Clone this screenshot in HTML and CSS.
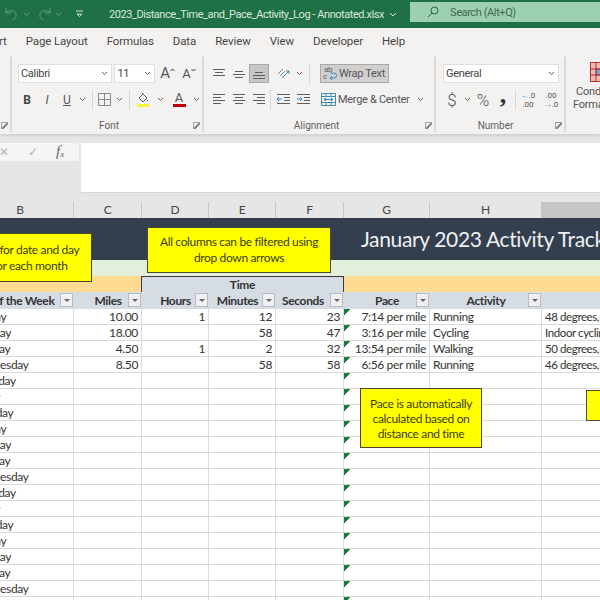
FILE: index.html
```html
<!DOCTYPE html>
<html lang="en">
<head>
  <meta charset="UTF-8">
  <title>2023_Distance_Time_and_Pace_Activity_Log - Annotated.xlsx</title>
  <link rel="stylesheet" href="styles.css">
</head>
<body>
<div class="page">

  <!-- title bar -->
  <div class="titlebar">
    <div class="qat">
      <svg class="undo" width="14" height="14" viewBox="0 0 14 14"><path d="M2 1v5h5M2 6c2-3 8-3.500 10 1 .8 3-1 5-3.500 6"/></svg>
      <svg class="qchev" width="7" height="5" viewBox="0 0 7 5"><path d="M1 1l2.500 2.500L6 1"/></svg>
      <svg class="redo" width="14" height="14" viewBox="0 0 14 14"><path d="M12 1v5H7M12 6C10 3 4 2.500 2 7c-.8 3 1 5 3.500 6"/></svg>
      <svg class="qchev" width="7" height="5" viewBox="0 0 7 5"><path d="M1 1l2.500 2.500L6 1"/></svg>
      <svg class="qcustom" width="9" height="8" viewBox="0 0 9 8"><path d="M1 1h7M2 4l2.500 2.500L7 4z"/></svg>
    </div>
    <div class="doc-title">2023_Distance_Time_and_Pace_Activity_Log - Annotated.xlsx
      <svg width="8" height="5" viewBox="0 0 8 5"><path d="M1 1l3 3 3-3"/></svg>
    </div>
    <div class="search">
      <svg width="12" height="12" viewBox="0 0 12 12"><circle cx="7.500" cy="4.500" r="3.500"/><path d="M5 7l-4 4"/></svg>
      <span>Search (Alt+Q)</span>
    </div>
  </div>

  <!-- tabs -->
  <div class="tabs">
    <span>Insert</span>
    <span>Page Layout</span>
    <span>Formulas</span>
    <span>Data</span>
    <span>Review</span>
    <span>View</span>
    <span>Developer</span>
    <span>Help</span>
  </div>

  <!-- ribbon -->
  <div class="ribbon">
    <div class="group g-clip">
      <div class="rows"></div>
      <div class="foot"><span class="launch"></span></div>
    </div>

    <div class="group g-font">
      <div class="rows">
        <div class="row">
          <div class="select font-name">Calibri<svg class="chev" width="7" height="5" viewBox="0 0 7 5"><path d="M1 1l2.500 2.500L6 1"/></svg></div>
          <div class="select font-size">11<svg class="chev" width="7" height="5" viewBox="0 0 7 5"><path d="M1 1l2.500 2.500L6 1"/></svg></div>
          <span class="fs-btn fs-up">A<svg width="5" height="4" viewBox="0 0 5 4"><path d="M.5 3l2-2 2 2"/></svg></span>
          <span class="fs-btn fs-down">A<svg width="5" height="4" viewBox="0 0 5 4"><path d="M.5 1l2 2 2-2"/></svg></span>
        </div>
        <div class="row">
          <span class="btn w20 b">B</span>
          <span class="btn w20 i">I</span>
          <span class="btn w20 u">U</span>
          <span class="btn w10"><svg class="chev" width="7" height="5" viewBox="0 0 7 5"><path d="M1 1l2.500 2.500L6 1"/></svg></span>
          <span class="sep sep-a"></span>
          <span class="btn w20"><svg width="13" height="13" viewBox="0 0 13 13"><path class="soft" d="M.5.500h12v12H.5zM6.500.500v12M.5 6.500h12"/></svg></span>
          <span class="btn w10"><svg class="chev" width="7" height="5" viewBox="0 0 7 5"><path d="M1 1l2.500 2.500L6 1"/></svg></span>
          <span class="sep sep-b"></span>
          <span class="btn w24"><svg width="14" height="15" viewBox="0 0 14 15"><path d="M3 6l4-4 4 4-4 4zM6 1l1 1M11.500 8v1"/><rect class="swatch-y" x="1" y="12" width="12" height="3"/></svg></span>
          <span class="btn w10"><svg class="chev" width="7" height="5" viewBox="0 0 7 5"><path d="M1 1l2.500 2.500L6 1"/></svg></span>
          <span class="btn w24 color-a">A<i></i></span>
          <span class="btn w10"><svg class="chev" width="7" height="5" viewBox="0 0 7 5"><path d="M1 1l2.500 2.500L6 1"/></svg></span>
        </div>
      </div>
      <div class="foot"><span></span><label>Font</label><span class="launch"></span></div>
    </div>

    <div class="group g-align">
      <div class="rows">
        <div class="row">
          <span class="btn w20"><svg width="12" height="10" viewBox="0 0 12 10"><path d="M0 .500h12M2 3.500h8M0 6.500h12"/></svg></span>
          <span class="btn w20"><svg width="12" height="10" viewBox="0 0 12 10"><path d="M2 2.500h8M0 5.500h12M2 8.500h8"/></svg></span>
          <span class="btn w20 pressed"><svg width="12" height="10" viewBox="0 0 12 10"><path d="M2 3.500h8M0 6.500h12M0 9.500h12"/></svg></span>
          <span class="btn w20 orient"><svg width="14" height="13" viewBox="0 0 14 13"><path class="soft" d="M1 7l5-5M3 9l5-5"/><path class="blue" d="M5 11l7-7M9 4h3v3"/></svg></span>
          <span class="btn w10"><svg class="chev" width="7" height="5" viewBox="0 0 7 5"><path d="M1 1l2.500 2.500L6 1"/></svg></span>
          <span class="sep sep-c"></span>
          <div class="wrap-btn">
            <svg width="14" height="15" viewBox="0 0 14 15"><path class="blue" d="M7 7h4a2.500 2.500 0 0 1 0 5H7M9 10l-2 2 2 2"/><text x="1" y="6" class="ic-text">ab</text><text x="0" y="13" class="ic-text">c</text></svg>
            Wrap Text
          </div>
        </div>
        <div class="row">
          <span class="btn w20"><svg width="12" height="11" viewBox="0 0 12 11"><path d="M0 .500h12M0 3.500h8M0 6.500h12M0 9.500h8"/></svg></span>
          <span class="btn w20"><svg width="12" height="11" viewBox="0 0 12 11"><path d="M0 .500h12M2 3.500h8M0 6.500h12M2 9.500h8"/></svg></span>
          <span class="btn w20"><svg width="12" height="11" viewBox="0 0 12 11"><path d="M0 .500h12M4 3.500h8M0 6.500h12M4 9.500h8"/></svg></span>
          <span class="sep sep-d"></span>
          <span class="btn w20"><svg width="13" height="11" viewBox="0 0 13 11"><path d="M0 .500h13M7 3.500h6M7 6.500h6M0 9.500h13"/><path class="blue" d="M5 5H0M2 3L0 5l2 2"/></svg></span>
          <span class="btn w20"><svg width="13" height="11" viewBox="0 0 13 11"><path d="M0 .500h13M7 3.500h6M7 6.500h6M0 9.500h13"/><path class="blue" d="M0 5h5M3 3l2 2-2 2"/></svg></span>
          <span class="merge">
            <svg width="15" height="13" viewBox="0 0 15 13"><path class="teal" d="M.5.500h14v12H.5zM.5 3.500h14M.5 9.500h14M5 .500v3M10 .500v3M5 9.500v3M10 9.500v3"/><path class="blue" d="M3 6.500h9M5 5L3 6.500 5 8M10 5l2 1.500L10 8"/></svg>
            Merge &amp; Center
          </span>
          <span class="btn w10 merge-chev"><svg class="chev" width="7" height="5" viewBox="0 0 7 5"><path d="M1 1l2.500 2.500L6 1"/></svg></span>
        </div>
      </div>
      <div class="foot"><span></span><label class="lbl-align">Alignment</label><span class="launch"></span></div>
    </div>

    <div class="group g-num">
      <div class="rows">
        <div class="row">
          <div class="select num-format">General<svg class="chev" width="7" height="5" viewBox="0 0 7 5"><path d="M1 1l2.500 2.500L6 1"/></svg></div>
        </div>
        <div class="row">
          <span class="btn w18 big">$</span>
          <span class="btn w12"><svg class="chev" width="7" height="5" viewBox="0 0 7 5"><path d="M1 1l2.500 2.500L6 1"/></svg></span>
          <span class="btn w20 big">%</span>
          <span class="btn w20 comma">,</span>
          <span class="sep sep-e"></span>
          <span class="btn w18 decimals"><small><em>&#8592;</em>.0</small><small>.00</small></span>
          <span class="btn w18 decimals gap-l"><small>.00</small><small><em>&#8594;</em>.0</small></span>
        </div>
      </div>
      <div class="foot"><span></span><label class="lbl-num">Number</label><span class="launch"></span></div>
    </div>

    <div class="group g-styles">
      <svg width="20" height="20" viewBox="0 0 20 20"><path fill="#f7b6ae" stroke="#a33" d="M.5.500h19v19H.5z"/><path fill="#6fa8dc" d="M6 7h14v6H6z"/><path stroke="#a33" d="M6 0v20M.5 7h19M.5 13h19"/></svg>
      <div class="styles-label">Conditional<br>Formatting <span class="hide">v</span></div>
    </div>
  </div>

  <!-- formula bar -->
  <div class="formula">
    <div class="fx-box">
      <span class="fx-x">&#10005;</span>
      <span class="fx-ok">&#10003;</span>
      <span class="fx">f<sub>x</sub></span>
    </div>
    <div class="fx-input"></div>
  </div>

  <!-- sheet -->
  <div class="sheet">
    <div class="grid col-heads">
      <div>B</div><div>C</div><div>D</div><div>E</div><div>F</div><div>G</div><div>H</div><div class="col-on"></div>
    </div>

    <div class="banner">January 2023 Activity Tracker</div>
    <div class="band-green"></div>

    <div class="grid band-row">
      <div class="band-or s2"></div>
      <div class="time s3">Time</div>
      <div class="band-or s3"></div>
    </div>

    <div class="grid head-row">
      <div class="hd hd-week"><span>Day of the Week</span><i class="filter"></i></div>
      <div class="hd"><span>Miles</span><i class="filter"></i></div>
      <div class="hd"><span>Hours</span><i class="filter"></i></div>
      <div class="hd hd-min"><span>Minutes</span><i class="filter"></i></div>
      <div class="hd hd-sec"><span>Seconds</span><i class="filter"></i></div>
      <div class="hd"><span>Pace</span><i class="filter"></i></div>
      <div class="hd"><span>Activity</span><i class="filter"></i></div>
      <div class="hd"></div>
    </div>

    <div class="grid data"><div>Sunday</div><div class="n">10.00</div><div class="n">1</div><div class="n">12</div><div class="n">23</div><div class="n warn">7:14 per mile</div><div>Running</div><div>48 degrees, clear</div></div>
    <div class="grid data"><div>Monday</div><div class="n">18.00</div><div class="n"></div><div class="n">58</div><div class="n">47</div><div class="n warn">3:16 per mile</div><div>Cycling</div><div>Indoor cycling</div></div>
    <div class="grid data"><div>Tuesday</div><div class="n">4.50</div><div class="n">1</div><div class="n">2</div><div class="n">32</div><div class="n warn">13:54 per mile</div><div>Walking</div><div>50 degrees, clear</div></div>
    <div class="grid data"><div>Wednesday</div><div class="n">8.50</div><div class="n"></div><div class="n">58</div><div class="n">58</div><div class="n warn">6:56 per mile</div><div>Running</div><div>46 degrees, clear</div></div>
    <div class="grid data"><div>Thursday</div><div></div><div></div><div></div><div></div><div class="warn"></div><div></div><div></div></div>
    <div class="grid data"><div>Friday</div><div></div><div></div><div></div><div></div><div class="warn"></div><div></div><div></div></div>
    <div class="grid data"><div>Saturday</div><div></div><div></div><div></div><div></div><div class="warn"></div><div></div><div></div></div>
    <div class="grid data"><div>Sunday</div><div></div><div></div><div></div><div></div><div class="warn"></div><div></div><div></div></div>
    <div class="grid data"><div>Monday</div><div></div><div></div><div></div><div></div><div class="warn"></div><div></div><div></div></div>
    <div class="grid data"><div>Tuesday</div><div></div><div></div><div></div><div></div><div class="warn"></div><div></div><div></div></div>
    <div class="grid data"><div>Wednesday</div><div></div><div></div><div></div><div></div><div class="warn"></div><div></div><div></div></div>
    <div class="grid data"><div>Thursday</div><div></div><div></div><div></div><div></div><div class="warn"></div><div></div><div></div></div>
    <div class="grid data"><div>Friday</div><div></div><div></div><div></div><div></div><div class="warn"></div><div></div><div></div></div>
    <div class="grid data"><div>Saturday</div><div></div><div></div><div></div><div></div><div class="warn"></div><div></div><div></div></div>
    <div class="grid data"><div>Sunday</div><div></div><div></div><div></div><div></div><div class="warn"></div><div></div><div></div></div>
    <div class="grid data"><div>Monday</div><div></div><div></div><div></div><div></div><div class="warn"></div><div></div><div></div></div>
    <div class="grid data"><div>Tuesday</div><div></div><div></div><div></div><div></div><div class="warn"></div><div></div><div></div></div>
    <div class="grid data"><div>Wednesday</div><div></div><div></div><div></div><div></div><div class="warn"></div><div></div><div></div></div>
    <div class="grid data"><div></div><div></div><div></div><div></div><div></div><div class="warn"></div><div></div><div></div></div>

    <!-- yellow notes floating over the cells -->
    <div class="note note-date">Set for date and day<br>for each month</div>
    <div class="note note-filter">All columns can be filtered using<br>drop down arrows</div>
    <div class="note note-pace">Pace is automatically<br>calculated based on<br>distance and time</div>
    <div class="note note-right"></div>
  </div>
</div>
</body>
</html>
```
FILE: styles.css
```css
* {
  box-sizing: border-box;
}
html, body {
  margin: 0;
  padding: 0;
}
body {
  font-family: Roboto, sans-serif;
  color: #444;
  background: #fff;
}
.page {
  width: 600px;
  height: 600px;
  overflow: hidden;
}
svg {
  display: block;
  fill: none;
  stroke: #605e5c;
  stroke-width: 1;
  flex: none;
}

/* title bar */
.titlebar {
  height: 28px;
  background: #1f7145;
  display: flex;
  align-items: center;
  color: #d9e9df;
}
.qat {
  display: flex;
  align-items: center;
  width: 109px;
  flex: none;
  padding-left: 4px;
}
.qat svg {
  stroke: #5f9c7c;
}
.qat .undo {
  margin-right: 5px;
}
.qat .redo {
  margin: 0 3px 0 8px;
}
.qat .qcustom {
  margin-left: 13px;
  stroke: #cfe3d7;
}
.doc-title {
  width: 301px;
  flex: none;
  padding-top: 1px;
  font-size: 11px;
  letter-spacing: -0.45px;
  display: flex;
  align-items: center;
  white-space: nowrap;
}
.doc-title svg {
  stroke: #d9e9df;
  margin-left: 5px;
}
.search {
  flex: 1;
  height: 20px;
  margin-top: -4px;
  background: #9dd0b0;
  display: flex;
  align-items: center;
  padding-left: 17px;
  font-size: 11px;
  letter-spacing: -0.4px;
  color: #3b6a50;
}
.search svg {
  stroke: #2f5c44;
  margin-right: 11px;
}

/* tabs */
.tabs {
  height: 28px;
  background: #f3f2f1;
  display: flex;
  align-items: center;
  gap: 19px;
  padding-bottom: 2px;
  font-size: 11.5px;
  letter-spacing: -0.12px;
  color: #484644;
  white-space: nowrap;
  margin-left: -22px;
}
.tabs span {
  flex: none;
}

/* ribbon */
.ribbon {
  height: 78px;
  background: #f3f2f1;
  display: flex;
  position: relative;
  box-shadow: 0 2px 2px #d0d0d0;
}
.group {
  flex: none;
  display: flex;
  flex-direction: column;
  border-right: 2px solid #dcdad8;
  margin: 1px 0 2px;
}
.g-clip {
  width: 12px;
}
.g-font {
  width: 192px;
  padding-left: 6px;
}
.g-align {
  width: 232px;
  padding-left: 5px;
}
.g-num {
  width: 130px;
  padding-left: 7px;
}
.g-styles {
  border: 0;
  width: 80px;
  align-items: flex-start;
  padding: 5px 0 0 24px;
}
.rows {
  flex: 1;
  padding-top: 7px;
}
.row {
  display: flex;
  align-items: center;
  height: 19px;
  margin-bottom: 7px;
  white-space: nowrap;
}
.foot {
  height: 14px;
  display: flex;
  justify-content: space-between;
  align-items: center;
  padding: 1px 2px 0 0;
  font-size: 10px;
  color: #605e5c;
}
.lbl-align {
  margin-right: 8px;
}
.lbl-num {
  margin-right: 14px;
}
.launch {
  width: 7px;
  height: 7px;
  border-left: 1px solid #a19f9d;
  border-top: 1px solid #a19f9d;
  background: linear-gradient(135deg, transparent 40%, #8a8886 40%, #8a8886 60%, transparent 60%);
}
.foot span:first-child {
  width: 7px;
}
.g-clip .foot {
  justify-content: flex-end;
}
.select {
  height: 19px;
  background: #fff;
  border: 1px solid #e1dfdd;
  display: flex;
  align-items: center;
  justify-content: space-between;
  padding: 0 3px 0 2px;
  font-size: 11px;
  letter-spacing: -0.3px;
  color: #444;
}
.chev {
  stroke: #605e5c;
}
.font-name {
  width: 95px;
  margin-right: 2px;
}
.font-size {
  width: 41px;
}
.num-format {
  width: 116px;
}
.fs-btn {
  display: flex;
  font-size: 15px;
  color: #555;
  line-height: 19px;
  margin-left: 5px;
  width: 20px;
}
.fs-btn svg {
  margin-top: 4px;
  stroke: #333;
}
.fs-down {
  font-size: 13px;
  margin-left: 2px;
}
.btn {
  height: 19px;
  display: flex;
  align-items: center;
  justify-content: center;
  flex: none;
  font-size: 12px;
  color: #555;
}
.w10 { width: 10px; }
.w12 { width: 12px; }
.w18 { width: 18px; }
.w20 { width: 20px; }
.w24 { width: 24px; }
.b {
  font-weight: 700;
  color: #444;
  margin-left: -1px;
}
.i {
  font-style: italic;
}
.u {
  text-decoration: underline;
}
.sep {
  width: 1px;
  height: 20px;
  background: #d8d6d4;
  flex: none;
}
.sep-a { margin: 0 1px 0 5px; }
.sep-b { margin: 0 1px 0 5px; }
.sep-c { margin: 0 10px 0 5px; }
.sep-d { margin: 0 2px 0 1px; }
.sep-e { margin: 0 3px 0 2px; }
.pressed {
  background: #c8c6c4;
  border: 1px solid #aaa8a6;
}
.orient {
  margin-left: 5px;
}
.soft {
  stroke: #8a8886;
}
.blue {
  stroke: #2f86c8;
}
.teal {
  stroke: #3f8fa8;
}
.swatch-y {
  fill: #f5f536;
  stroke: none;
}
.color-a {
  flex-direction: column;
  font-size: 13px;
  line-height: 11px;
  margin-left: 2px;
}
.color-a i {
  display: block;
  width: 13px;
  height: 3px;
  background: #c00000;
  margin-top: 1px;
}
.ic-text {
  font-size: 8px;
  fill: #605e5c;
  stroke: none;
}
.wrap-btn {
  width: 69px;
  height: 19px;
  background: #d2d0ce;
  border: 1px solid #aaa8a6;
  display: flex;
  align-items: center;
  gap: 2px;
  padding-left: 2px;
  font-size: 11px;
  letter-spacing: -0.3px;
  color: #555;
}
.merge {
  display: flex;
  align-items: center;
  gap: 2px;
  margin-left: 8px;
  font-size: 11px;
  letter-spacing: -0.3px;
  color: #555;
}
.merge-chev {
  margin-left: 6px;
}
.big {
  font-size: 17px;
  font-weight: 300;
}
.comma {
  font-family: "Liberation Serif", serif;
  font-size: 26px;
  font-weight: 700;
  line-height: 19px;
  padding-bottom: 10px;
  color: #333;
}
.decimals {
  flex-direction: column;
  line-height: 9px;
}
.decimals small {
  font-size: 8px;
}
.decimals em {
  font-style: normal;
  color: #2f86c8;
}
.gap-l {
  margin-left: 5px;
}
.styles-label {
  margin: 3px 0 0 -17px;
  font-size: 11px;
  letter-spacing: -0.2px;
  line-height: 13px;
  text-align: center;
  white-space: nowrap;
  color: #555;
}
.hide {
  visibility: hidden;
}

/* formula bar */
.formula {
  height: 68px;
  background: #e6e6e6;
  padding-top: 9px;
  display: flex;
  align-items: flex-start;
  gap: 2px;
}
.fx-box {
  width: 79px;
  height: 18px;
  background: #f5f5f5;
  display: flex;
  align-items: center;
  font-size: 12px;
  color: #b5b5b5;
}
.fx-x {
  width: 20px;
  margin-left: -6px;
  text-align: center;
}
.fx-ok {
  width: 38px;
  text-align: center;
}
.fx {
  font-family: "Liberation Serif", serif;
  font-style: italic;
  font-size: 15px;
  color: #666;
  line-height: 14px;
  margin-left: 4px;
}
.fx sub {
  font-size: 9px;
  vertical-align: -1px;
}
.fx-input {
  flex: 1;
  height: 50px;
  background: #fff;
  border-bottom: 1px solid #d4d4d4;
}

/* sheet */
.sheet {
  position: relative;
  font-family: Lato, sans-serif;
  font-size: 12px;
  letter-spacing: -0.35px;
  color: #333;
}
.grid {
  display: grid;
  grid-template-columns: 107px 68px 67px 67px 68px 86px 112px 200px;
  margin-left: -33px;
}
.col-heads {
  height: 16px;
  background: #e6e6e6;
  font-size: 12px;
  line-height: 16px;
  text-align: center;
  color: #444;
}
.col-heads div {
  border-right: 1px solid #c8c8c8;
}
.col-on {
  background: #c6c6c6;
}
.banner {
  height: 42px;
  background: #333f4f;
  color: #eef0f2;
  padding-left: 361px;
  font-size: 21px;
  letter-spacing: -0.35px;
  line-height: 42px;
  white-space: nowrap;
  overflow: hidden;
}
.band-green {
  height: 16px;
  background: #e2efda;
}
.band-row {
  height: 16px;
}
.band-or {
  background: #fddb93;
}
.s2 { grid-column: span 2; }
.s3 { grid-column: span 3; }
.time {
  background: #d6dce4;
  border: 1px solid #3a3a3a;
  border-bottom: 0;
  margin-left: -1px;
  text-align: center;
  font-weight: 700;
  line-height: 15px;
}
.head-row {
  height: 17px;
  background: #d6dce4;
}
.hd {
  position: relative;
  text-align: center;
  font-weight: 700;
  line-height: 17px;
  white-space: nowrap;
}
.hd-week {
  padding-right: 16px;
}
.hd-min {
  padding-right: 10px;
}
.hd-sec {
  padding-right: 14px;
}
.filter {
  position: absolute;
  top: 1px;
  right: 1px;
  width: 13px;
  height: 14px;
  background: #f0f0f0;
  border: 1px solid #b8bcc2;
}
.filter::after {
  content: "";
  position: absolute;
  left: 3px;
  top: 5px;
  border: 3px solid transparent;
  border-top-color: #666;
  border-bottom: 0;
}
.data {
  height: 16px;
  line-height: 15px;
  border-bottom: 1px solid #d9d9d9;
  white-space: nowrap;
}
.data div {
  border-right: 1px solid #dcdcdc;
  padding: 0 3px 0 3px;
  overflow: hidden;
}
.data div:last-child {
  font-size: 11.5px;
  letter-spacing: -0.4px;
}
.data .warn {
  background: linear-gradient(135deg, #207a3a 4.500px, transparent 4.500px) no-repeat 0 0 / 7px 7px;
}
.data .n {
  text-align: right;
}

/* notes */
.note {
  position: absolute;
  background: #ffff00;
  border: 1px solid #4a4a2a;
  color: #3d3d14;
  text-align: center;
  font-size: 12px;
  line-height: 16px;
  white-space: nowrap;
  display: flex;
  align-items: center;
  justify-content: center;
}
.note-date {
  left: -32px;
  top: 31px;
  width: 124px;
  height: 49px;
}
.note-filter {
  left: 147px;
  top: 25px;
  width: 184px;
  height: 46px;
}
.note-pace {
  left: 360px;
  top: 186px;
  width: 122px;
  height: 60px;
  line-height: 15px;
}
.note-right {
  left: 586px;
  top: 188px;
  width: 40px;
  height: 31px;
}
```
